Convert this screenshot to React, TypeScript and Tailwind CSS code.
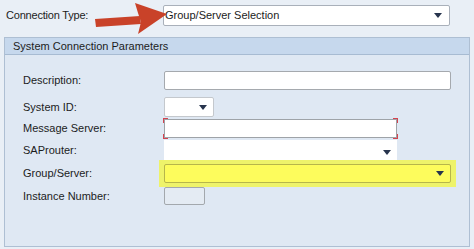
import React from "react";

function Caret() {
  return (
    <svg width="8" height="5" viewBox="0 0 8 5" className="shrink-0">
      <polygon points="0,0 8,0 4,5" fill="#27344d" />
    </svg>
  );
}

function Corner({ pos }: { pos: string }) {
  return <span className={`absolute w-[5px] h-[5px] ${pos}`} />;
}

export default function App() {
  const font = { fontFamily: '"Liberation Sans", Arial, sans-serif' };
  return (
    <div
      className="w-[474px] h-[249px] bg-[#e9eff6] text-[11px] text-[#1c1c1c] flex flex-col overflow-hidden"
      style={font}
    >
      {/* top row */}
      <div className="relative flex items-center h-[21px] mt-[5px] pl-[6px]">
        <div className="w-[157px] tracking-[-0.2px]">Connection Type:</div>
        <div className="w-[287px] h-[21px] bg-white border border-[#a9b0ba] rounded-[2px] flex items-center justify-between pl-[1px] pr-[7px]">
          <span>Group/Server Selection</span>
          <Caret />
        </div>
        <svg
          width="80"
          height="36"
          viewBox="0 0 80 36"
          className="absolute left-[90px] top-[-5px]"
        >
          <polygon points="5,19 50,16 51,24 6,27" fill="#c94229" />
          <polygon points="45,3 77,14 48,34 51,22 48,13" fill="#c94229" />
        </svg>
      </div>

      {/* group box */}
      <div className="mt-[11px] mx-[4px] flex flex-col border border-[#aebfd3] h-[210px]">
        <div className="h-[17px] bg-[#c6d8ed] border-b border-[#a7bbd2] flex items-center pl-[8px]">
          System Connection Parameters
        </div>
        <div className="flex-1 bg-[#dfe8f3] pl-[18px] pt-[16px] flex flex-col">
          <div className="flex items-center h-[19px]">
            <div className="w-[141px]">Description:</div>
            <div className="w-[287px] h-[19px] bg-white border border-[#a5a9ae] rounded-[2px]" />
          </div>
          <div className="flex items-center h-[20px] mt-[7px]">
            <div className="w-[141px]">System ID:</div>
            <div className="w-[50px] h-[20px] bg-white border border-[#c4c8cd] rounded-[2px] flex items-center justify-end pr-[6px]">
              <Caret />
            </div>
          </div>
          <div className="flex items-center h-[19px] mt-[2px]">
            <div className="w-[141px]">Message Server:</div>
            <div className="relative w-[233px] h-[19px] bg-white border border-[#9ea3a8]">
              <Corner pos="-left-[2px] -top-[2px] border-l border-t border-[#d4434f]" />
              <Corner pos="-right-[2px] -top-[2px] border-r border-t border-[#d4434f]" />
              <Corner pos="-left-[2px] -bottom-[2px] border-l border-b border-[#d4434f]" />
              <Corner pos="-right-[2px] -bottom-[2px] border-r border-b border-[#d4434f]" />
            </div>
          </div>
          <div className="flex items-center h-[20px] mt-[2px]">
            <div className="w-[141px]">SAProuter:</div>
            <div className="w-[233px] h-[20px] bg-white flex items-center justify-end pr-[6px] pt-[4px]">
              <Caret />
            </div>
          </div>
          <div className="flex items-center h-[19px] mt-[4px]">
            <div className="w-[141px]">Group/Server:</div>
            <div className="-mx-[5px] -my-[4px] px-[5px] py-[4px] bg-[#eef36a]">
              <div className="w-[287px] h-[19px] bg-[#fdfc5c] border border-[#b7b64a] rounded-[2px] flex items-center justify-end pr-[6px]">
                <Caret />
              </div>
            </div>
          </div>
          <div className="flex items-center h-[18px] mt-[4px]">
            <div className="w-[141px]">Instance Number:</div>
            <div className="w-[41px] h-[18px] bg-[#e4ebf3] border border-[#a3a8ad] rounded-[2px]" />
          </div>
        </div>
      </div>
    </div>
  );
}
